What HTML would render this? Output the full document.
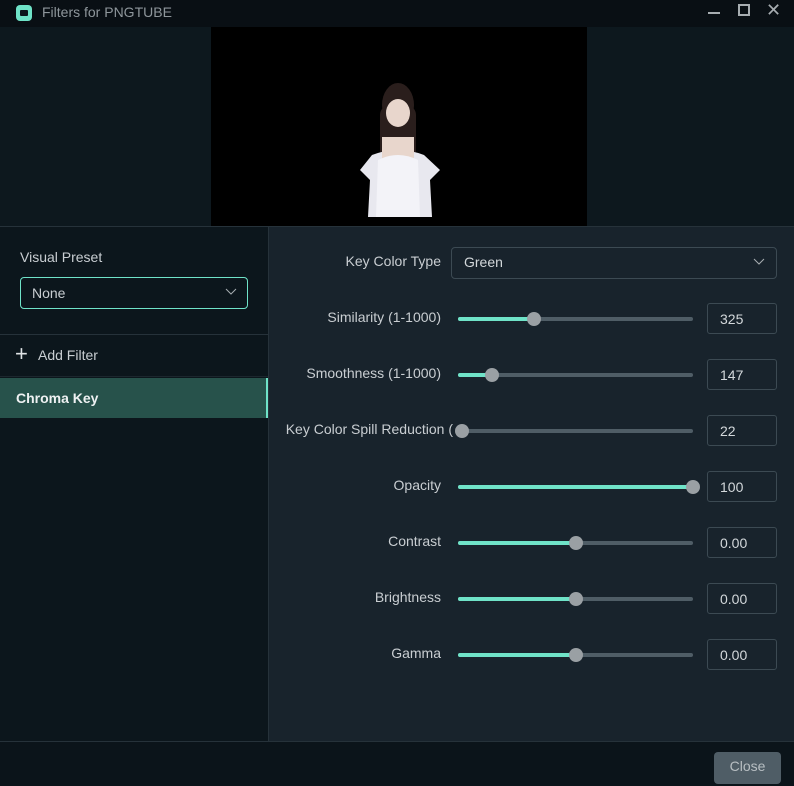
<!DOCTYPE html>
<html><head><meta charset="utf-8"><style>
*{margin:0;padding:0;box-sizing:border-box}
body{width:794px;height:786px;overflow:hidden;background:#0c161c;font-family:"Liberation Sans",sans-serif;font-size:14px;color:#c9ced2;position:relative}
.a{position:absolute}
.lbl{position:absolute;right:353px;text-align:right;white-space:nowrap;font-size:14px;color:#c9ced2}
.track{position:absolute;left:458px;width:235px;height:4px;border-radius:2px;background:#4f5d66}
.fill{position:absolute;left:0;top:0;height:4px;border-radius:2px;background:#6fe3c8}
.thumb{position:absolute;top:-5px;width:14px;height:14px;border-radius:50%;background:#9aa0a4}
.inp{position:absolute;left:707px;width:70px;height:31px;border:1px solid #3c4a53;border-radius:3px;padding:7px 0 0 12px;color:#d3d8db}
</style></head><body>
<div class="a" style="left:0;top:0;width:794px;height:27px;background:#090f14"></div>
<div class="a" style="left:16px;top:5px;width:16px;height:16px;border-radius:4px;background:#6fe3c8"></div>
<div class="a" style="left:20px;top:10px;width:8px;height:6px;border-radius:1px;background:#0c161c"></div>
<div class="a" style="left:42px;top:4px;font-size:14px;color:#8e969b">Filters for PNGTUBE</div>
<div class="a" style="left:708px;top:12px;width:12px;height:2px;background:#a7adb1"></div>
<div class="a" style="left:738px;top:4px;width:12px;height:12px;border:2px solid #a7adb1"></div>
<div class="a" style="left:766px;top:0px;font-size:18px;color:#a7adb1">✕</div>
<div class="a" style="left:0;top:27px;width:794px;height:199px;background:#0d181e"></div>
<div class="a" style="left:211px;top:27px;width:376px;height:199px;background:#000"></div>
<svg class="a" style="left:350px;top:75px" width="100" height="145" viewBox="0 0 100 145">
<ellipse cx="48" cy="30" rx="16" ry="22" fill="#2a1e1c"/>
<rect x="30" y="30" width="36" height="55" rx="10" fill="#2a1e1c"/>
<ellipse cx="48" cy="38" rx="12" ry="14" fill="#e8d6cc"/>
<path d="M10 95 L22 80 Q48 70 74 80 L90 95 L80 105 L82 142 L18 142 L20 105 Z" fill="#e8e8ef"/>
<rect x="32" y="62" width="32" height="22" fill="#e8d6cc"/>
<path d="M28 85 Q48 75 68 85 L70 142 L26 142 Z" fill="#f3f3f8"/>
</svg>
<div class="a" style="left:0;top:226px;width:794px;height:1px;background:#26323a"></div>
<div class="a" style="left:269px;top:227px;width:525px;height:514px;background:#18232c"></div>
<div class="a" style="left:268px;top:227px;width:1px;height:514px;background:#26323a"></div>
<div class="a" style="left:20px;top:249px">Visual Preset</div>
<div class="a" style="left:20px;top:277px;width:228px;height:32px;border:1px solid #6fe3c8;border-radius:4px;padding:7px 0 0 11px">None</div>
<svg class="a" style="left:225px;top:288px" width="12" height="8"><path d="M1 1 L6 6 L11 1" stroke="#a7adb1" stroke-width="1" fill="none"/></svg>
<div class="a" style="left:0;top:334px;width:268px;height:1px;background:#26323a"></div>
<div class="a" style="left:15px;top:341px;font-size:22px;color:#dfe3e5">+</div>
<div class="a" style="left:38px;top:347px">Add Filter</div>
<div class="a" style="left:0;top:376px;width:268px;height:1px;background:#1c272e"></div>
<div class="a" style="left:0;top:378px;width:268px;height:40px;background:#27524b"></div>
<div class="a" style="left:266px;top:378px;width:2px;height:40px;background:#6fe3c8"></div>
<div class="a" style="left:16px;top:390px;color:#eef1f2;font-weight:bold">Chroma Key</div>

<div class="lbl" style="top:253px">Key Color Type</div>
<div class="a" style="left:451px;top:247px;width:326px;height:32px;border:1px solid #3c4a53;border-radius:4px;padding:6px 0 0 12px;color:#d3d8db">Green</div>
<svg class="a" style="left:753px;top:258px" width="12" height="8"><path d="M1 1 L6 6 L11 1" stroke="#a7adb1" stroke-width="1" fill="none"/></svg>

<div class="lbl" style="top:309px">Similarity (1-1000)</div>
<div class="track" style="top:317px"><div class="fill" style="width:76px"></div><div class="thumb" style="left:69px"></div></div>
<div class="inp" style="top:303px">325</div>

<div class="lbl" style="top:365px">Smoothness (1-1000)</div>
<div class="track" style="top:373px"><div class="fill" style="width:34px"></div><div class="thumb" style="left:27px"></div></div>
<div class="inp" style="top:359px">147</div>

<div class="lbl" style="top:421px;right:341px">Key Color Spill Reduction (</div>
<div class="track" style="top:429px"><div class="thumb" style="left:-3px"></div></div>
<div class="inp" style="top:415px">22</div>

<div class="lbl" style="top:477px">Opacity</div>
<div class="track" style="top:485px"><div class="fill" style="width:235px"></div><div class="thumb" style="left:228px"></div></div>
<div class="inp" style="top:471px">100</div>

<div class="lbl" style="top:533px">Contrast</div>
<div class="track" style="top:541px"><div class="fill" style="width:118px"></div><div class="thumb" style="left:111px"></div></div>
<div class="inp" style="top:527px">0.00</div>

<div class="lbl" style="top:589px">Brightness</div>
<div class="track" style="top:597px"><div class="fill" style="width:118px"></div><div class="thumb" style="left:111px"></div></div>
<div class="inp" style="top:583px">0.00</div>

<div class="lbl" style="top:645px">Gamma</div>
<div class="track" style="top:653px"><div class="fill" style="width:118px"></div><div class="thumb" style="left:111px"></div></div>
<div class="inp" style="top:639px">0.00</div>

<div class="a" style="left:0;top:741px;width:794px;height:1px;background:#26323a"></div>
<div class="a" style="left:0;top:742px;width:794px;height:44px;background:#0b141a"></div>
<div class="a" style="left:714px;top:752px;width:67px;height:32px;border-radius:4px;background:#4f5d66;color:#b7bec2;text-align:center;padding-top:6px">Close</div>
</body></html>
